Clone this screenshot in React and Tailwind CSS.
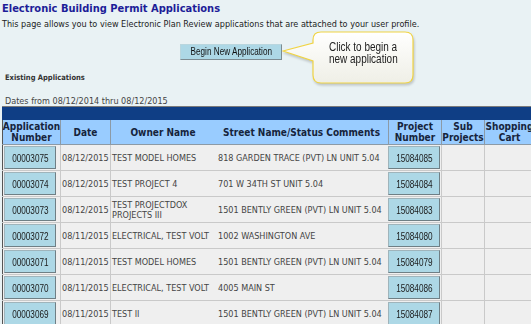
import React from "react";

const sans = "font-['DejaVu_Sans_Condensed','DejaVu_Sans',sans-serif] font-stretch-condensed";
const arial = "font-['Liberation_Sans',Arial,sans-serif]";

const apps = [
  { id: "00003075", date: "08/12/2015", owner: "TEST MODEL HOMES", street: "818 GARDEN TRACE (PVT) LN UNIT 5.04", project: "15084085" },
  { id: "00003074", date: "08/12/2015", owner: "TEST PROJECT 4", street: "701 W 34TH ST UNIT 5.04", project: "15084084" },
  { id: "00003073", date: "08/12/2015", owner: "TEST PROJECTDOX PROJECTS III", street: "1501 BENTLY GREEN (PVT) LN UNIT 5.04", project: "15084083" },
  { id: "00003072", date: "08/11/2015", owner: "ELECTRICAL, TEST VOLT", street: "1002 WASHINGTON AVE", project: "15084080" },
  { id: "00003071", date: "08/11/2015", owner: "TEST MODEL HOMES", street: "1501 BENTLY GREEN (PVT) LN UNIT 5.04", project: "15084079" },
  { id: "00003070", date: "08/11/2015", owner: "ELECTRICAL, TEST VOLT", street: "4005 MAIN ST", project: "15084086" },
  { id: "00003069", date: "08/11/2015", owner: "TEST II", street: "1501 BENTLY GREEN (PVT) LN UNIT 5.04", project: "15084087" },
];

// narrow sans (no Arial Narrow installed, so squeeze Liberation Sans)
const Narrow = ({ children, className = "" }) => (
  <span className={`inline-block whitespace-nowrap scale-x-[0.78] ${arial} ${className}`}>{children}</span>
);

const CellButton = ({ children }) => (
  <div className="h-full w-full flex items-center justify-center bg-[#add8e6] border border-[#9fb4bb] border-r-[#6f7f85] border-b-[#6f7f85] text-[10.5px] text-[#1a1a1a]">
    <Narrow>{children}</Narrow>
  </div>
);

const Callout = () => (
  <div className="absolute left-[282px] top-[30px] w-[134px] h-[58px]">
    <svg width="134" height="58" className="absolute inset-0 drop-shadow-[1px_2px_1px_rgba(0,0,0,0.18)]">
      <defs>
        <linearGradient id="cg" x1="0" y1="0" x2="0" y2="1">
          <stop offset="0" stopColor="#ffffff" />
          <stop offset="1" stopColor="#efefe6" />
        </linearGradient>
      </defs>
      <path
        d="M1,21 L31,13 L31,10 Q31,2 39,2 L123,2 Q131,2 131,10 L131,45 Q131,53 123,53 L39,53 Q31,53 31,45 L31,31 Z"
        fill="url(#cg)"
        stroke="#f0d444"
        strokeWidth="1.2"
      />
    </svg>
    <div className="absolute left-[31px] top-[2px] w-[100px] pt-[9px] flex flex-col items-center text-[12px] leading-[12px] text-[#222]">
      <span className={`inline-block whitespace-nowrap scale-x-[0.83] ${arial}`}>Click to begin a</span>
      <span className={`inline-block whitespace-nowrap scale-x-[0.83] ${arial}`}>new application</span>
    </div>
  </div>
);

export default function App() {
  return (
    <div className={`relative w-[531px] h-[324px] overflow-hidden bg-[#e9f2f4] ${sans}`}>
      <h1 className="h-[15px] pl-[2px] pt-[2px] text-[11px] leading-[13px] font-bold text-[#1d1d98]">
        Electronic Building Permit Applications
      </h1>
      <p className="h-[11px] pl-[2px] mt-[4px] text-[9px] leading-[11px] text-[#222] whitespace-nowrap">
        This page allows you to view Electronic Plan Review applications that are attached to your user profile.
      </p>

      <div className="flex h-[16px] mt-[14px] pl-[180px]">
        <button className="h-[16px] w-[102px] flex items-center justify-center bg-[#add8e6] border border-[#b9d6de] border-r-[#7d8c92] border-b-[#7d8c92] text-[10.5px] text-[#111]">
          <Narrow>Begin New Application</Narrow>
        </button>
      </div>

      <div className="h-[9px] mt-[13px] pl-[5px] text-[7.5px] leading-[9px] font-bold text-[#333]">Existing Applications</div>
      <div className="h-[10px] mt-[14px] pl-[5px] text-[9px] leading-[10px] text-[#444]">Dates from 08/12/2014 thru 08/12/2015</div>

      <div className="ml-[2px] w-[540px]">
        <div className="h-[14px] border-t border-[#7a7a7a] bg-[#0f3e85]" />
        <div className="flex h-[25px] bg-[#99ccff] border-b border-[#8c9aa6] text-[10px] leading-[11px] font-bold text-[#16243c] text-center">
          <div className="w-[58px] border-l border-[#555] flex items-center justify-center">Application<br />Number</div>
          <div className="w-[50px] border-l border-[#8c9aa6] flex items-center justify-center">Date</div>
          <div className="w-[105px] border-l border-[#8c9aa6] flex items-center justify-center">Owner Name</div>
          <div className="w-[173px] flex items-center justify-center">Street Name/Status Comments</div>
          <div className="w-[53px] border-l border-[#8c9aa6] flex items-center justify-center">Project<br />Number</div>
          <div className="w-[43px] border-l border-[#8c9aa6] flex items-center justify-center">Sub<br />Projects</div>
          <div className="w-[50px] border-l border-[#8c9aa6] flex items-center justify-center">Shopping<br />Cart</div>
        </div>
        {apps.map((a) => (
          <div key={a.id} className="flex h-[26px] bg-[#efefef] border-b border-[#c9c9c9] text-[9px] leading-[10px] text-[#444]">
            <div className="w-[58px] border-l border-[#555] pl-[1px] pr-[4px] py-[1px]">
              <CellButton>{a.id}</CellButton>
            </div>
            <div className="w-[50px] border-l border-[#c9c9c9] pl-[1px] flex items-center whitespace-nowrap">{a.date}</div>
            <div className="w-[105px] border-l border-[#c9c9c9] pl-[1px] flex items-center">{a.owner}</div>
            <div className="w-[173px] pl-[3px] flex items-center whitespace-nowrap">{a.street}</div>
            <div className="w-[53px] pr-[1px] py-[1px]">
              <CellButton>{a.project}</CellButton>
            </div>
            <div className="w-[43px] border-l border-[#c9c9c9]" />
            <div className="w-[50px] border-l border-[#c9c9c9]" />
          </div>
        ))}
      </div>

      <Callout />
    </div>
  );
}
